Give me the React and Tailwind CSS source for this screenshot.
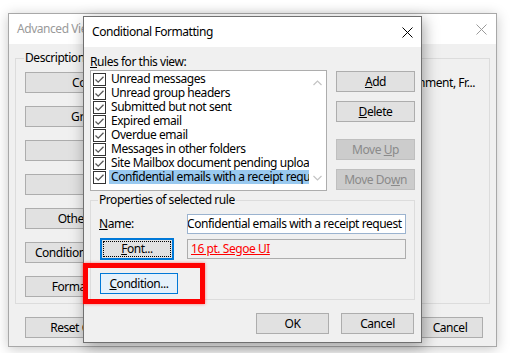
import React from "react";

const font = { fontFamily: '"Segoe UI", "Noto Sans", sans-serif' };

// small close cross used in both title bars
const CloseX = ({ color }) => (
  <svg width="11" height="11" viewBox="0 0 11 11">
    <path d="M0.5 0.5 L10.5 10.5 M10.5 0.5 L0.5 10.5" stroke={color} strokeWidth="1" fill="none" />
  </svg>
);

const Check = () => (
  <span className="w-[13px] h-[13px] border border-[#333] bg-white flex items-center justify-center shrink-0">
    <svg width="11" height="11" viewBox="0 0 11 11">
      <path d="M1.5 5.5 L4.2 8.2 L9.5 2.8" stroke="#555" strokeWidth="1.3" fill="none" />
    </svg>
  </span>
);

const Chevron = ({ up }) => (
  <svg width="9" height="6" viewBox="0 0 9 6">
    <path d={up ? "M0.5 5 L4.5 1 L8.5 5" : "M0.5 1 L4.5 5 L8.5 1"} stroke="#c4c4c4" strokeWidth="1.2" fill="none" />
  </svg>
);

const Btn = ({ children, className = "" }) => (
  <div className={`h-[21px] border border-[#adadad] bg-[#e1e1e1] flex items-center justify-center whitespace-nowrap ${className}`}>
    {children}
  </div>
);

const DisabledBtn = ({ children }) => (
  <div className="h-[21px] w-[79px] border border-[#bfbfbf] bg-[#cccccc] text-[#8a8a8a] flex items-center justify-center whitespace-nowrap">
    {children}
  </div>
);

const rules = [
  "Unread messages",
  "Unread group headers",
  "Submitted but not sent",
  "Expired email",
  "Overdue email",
  "Messages in other folders",
  "Site Mailbox document pending upload",
  "Confidential emails with a receipt request",
];

const backButtons = [
  { label: "Columns...", desc: "Importance, Reminder, Icon, Flag Status, Assignment, Fr..." },
  { label: "Group By...", desc: "" },
  { label: "Sort...", desc: "" },
  { label: "Filter...", desc: "" },
  { label: "Other Settings...", desc: "" },
  { label: "Conditional Formatting...", desc: "" },
  { label: "Format Columns...", desc: "" },
];

export default function App() {
  return (
    <div
      className="relative w-[512px] h-[353px] bg-white overflow-hidden text-[12px] leading-[16px] tracking-[-0.45px] text-black"
      style={font}
    >
      {/* Advanced View Settings window (behind) */}
      <div className="absolute left-[8px] top-[13px] w-[489px] h-[334px] border border-[#a8a8a8] bg-[#f0f0f0] shadow-[0_2px_12px_rgba(0,0,0,0.22)] flex flex-col">
        <div className="h-[30px] bg-white shrink-0 flex items-center justify-between pl-[8px] pr-[9px]">
          <span className="text-[#9a9a9a]">Advanced View Settings: Compact</span>
          <CloseX color="#9a9a9a" />
        </div>
        <div className="flex-1 px-[6px] pt-[6px] flex flex-col">
          <fieldset className="border border-[#dcdcdc] h-[254px] px-[9px] pt-[6px] flex flex-col gap-[13px]">
            <legend className="-ml-[1px] px-[1px] leading-[16px]">Description</legend>
            {backButtons.map((b) => (
              <div key={b.label} className="flex items-center">
                <Btn className="w-[149px] shrink-0">{b.label}</Btn>
                <span className="flex-1 text-right pr-[5px] whitespace-nowrap overflow-hidden">{b.desc}</span>
              </div>
            ))}
          </fieldset>
          <div className="flex justify-between mt-[13px] pl-[10px] pr-[7px]">
            <Btn className="w-[149px]">Reset Current View</Btn>
            <div className="flex gap-[12px]">
              <Btn className="w-[66px]">OK</Btn>
              <Btn className="w-[66px]">Cancel</Btn>
            </div>
          </div>
        </div>
      </div>

      {/* Conditional Formatting dialog (front) */}
      <div className="absolute left-[83px] top-[16px] w-[339px] h-[327px] border border-[#707070] bg-[#f0f0f0] shadow-[2px_4px_14px_rgba(0,0,0,0.35)] flex flex-col">
        <div className="h-[30px] bg-white shrink-0 flex items-center justify-between pl-[8px] pr-[8px]">
          <span>Conditional Formatting</span>
          <CloseX color="#000" />
        </div>
        <div className="flex-1 px-[6px] pt-[7px] flex flex-col">
          <div className="flex gap-[9px]">
            <div className="w-[237px]">
              <div className="h-[16px]">
                <span className="underline">R</span>ules for this view:
              </div>
              <div className="h-[121px] border border-[#adadad] bg-white flex">
                <div className="flex-1 pt-[1px] overflow-hidden">
                  {rules.map((r, i) => (
                    <div key={r} className="h-[14px] flex items-center pl-[2px]">
                      <Check />
                      <span
                        className={`ml-[3px] pl-[2px] h-[14px] flex items-center whitespace-nowrap overflow-hidden flex-1 ${
                          i === rules.length - 1 ? "bg-[#99c9ef]" : ""
                        }`}
                      >
                        {r}
                      </span>
                    </div>
                  ))}
                </div>
                <div className="w-[17px] flex flex-col items-center justify-between pt-[9px] pb-[9px]">
                  <Chevron up />
                  <Chevron />
                </div>
              </div>
            </div>
            <div className="pt-[17px] flex flex-col">
              <Btn className="w-[79px]">
                <span className="underline">A</span>dd
              </Btn>
              <Btn className="w-[79px] mt-[9px]">
                <span className="underline">D</span>elete
              </Btn>
              <div className="mt-[17px]">
                <DisabledBtn>
                  Move&nbsp;<span className="underline">U</span>p
                </DisabledBtn>
              </div>
              <div className="mt-[9px]">
                <DisabledBtn>
                  Move Do<span className="underline">w</span>n
                </DisabledBtn>
              </div>
            </div>
          </div>

          <fieldset className="mt-[1px] w-[325px] h-[108px] border border-[#dcdcdc] pl-[8px] pr-[8px] pt-[6px]">
            <legend className="-ml-[1px] px-[1px] leading-[16px]">Properties of selected rule</legend>
            <div className="grid grid-cols-[88px_219px] gap-y-[4px] items-center">
              <span>
                <span className="underline">N</span>ame:
              </span>
              <div className="h-[20px] border border-[#9bb3cf] bg-white flex items-center overflow-hidden">
                <span className="whitespace-nowrap -ml-[1px]">Confidential emails with a receipt request</span>
              </div>
              <div className="ml-[1px] w-[74px] h-[22px] border-2 border-[#0078d7] bg-[#e1e1e1] p-[1px]">
                <div className="h-full border border-dotted border-black flex items-center justify-center">
                  <span className="underline">F</span>ont...
                </div>
              </div>
              <div className="h-[20px] border border-[#adadad] bg-[#f0f0f0] flex items-center pl-[3px]">
                <span className="text-[#ff0000] underline">16 pt. Segoe UI</span>
              </div>
            </div>
            <div className="mt-[13px] ml-[1px] w-[78px] h-[21px] border border-[#0078d7] bg-[#e5f1fb] flex items-center justify-center">
              <span className="underline">C</span>ondition...
            </div>
          </fieldset>

          <div className="flex justify-end gap-[12px] mt-[13px] pr-[1px]">
            <Btn className="w-[73px]">OK</Btn>
            <Btn className="w-[73px]">Cancel</Btn>
          </div>
        </div>
      </div>

      {/* red highlight annotation */}
      <div className="absolute left-[83px] top-[263px] w-[122px] h-[41px] border-[5px] border-[#ff0000] shadow-[0_0_3px_rgba(255,0,0,0.5)]" />
    </div>
  );
}
